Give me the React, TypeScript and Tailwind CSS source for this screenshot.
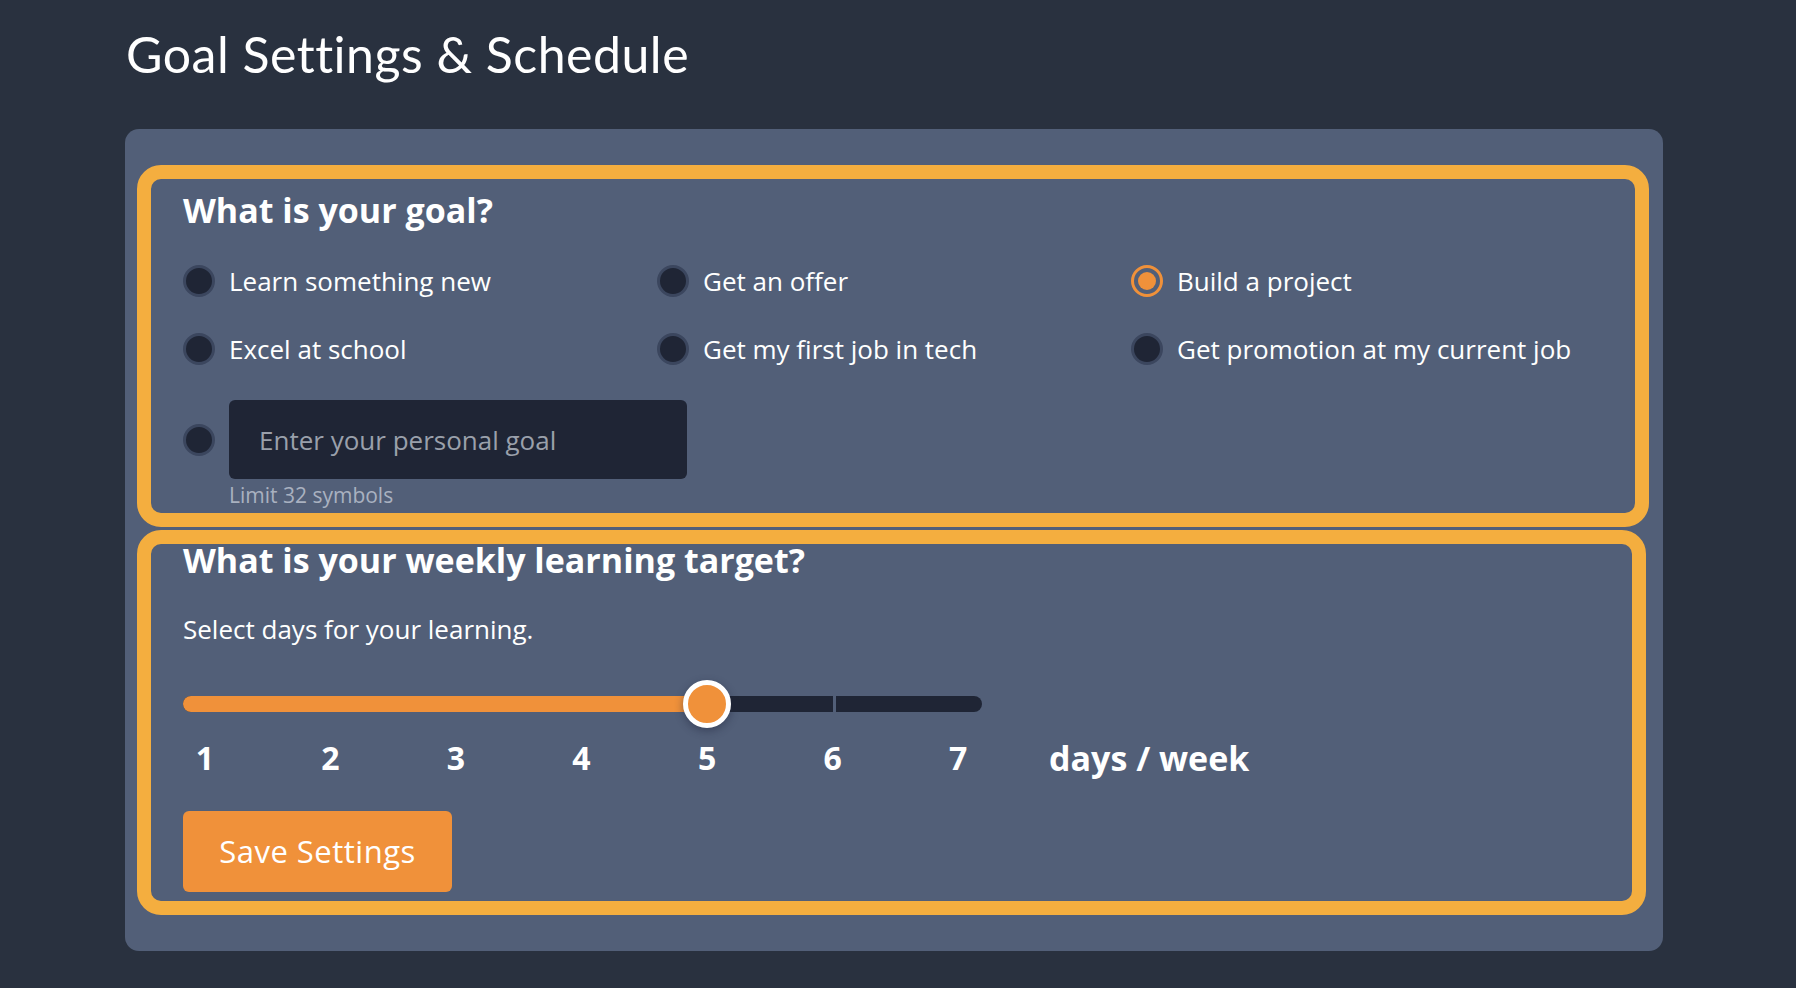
import { useState } from 'react';

const GOALS = [
  'Learn something new',
  'Get an offer',
  'Build a project',
  'Excel at school',
  'Get my first job in tech',
  'Get promotion at my current job',
];

const DAYS = [1, 2, 3, 4, 5, 6, 7];

function Radio({ checked }: { checked: boolean }) {
  return checked ? (
    <span className="flex h-8 w-8 shrink-0 items-center justify-center rounded-full border-[3px] border-[#f0913a]">
      <span className="h-[18px] w-[18px] rounded-full bg-[#f0913a]" />
    </span>
  ) : (
    <span className="h-8 w-8 shrink-0 rounded-full border-[3px] border-[#3b465e] bg-[#1f2535]" />
  );
}

export default function App() {
  const [goal, setGoal] = useState('Build a project');
  const [days] = useState(5);

  return (
    <div className="min-h-screen bg-[#29313f] px-[125px] pt-[22px] pb-10 text-white font-['Open_Sans',sans-serif]">
      <h1 className="pl-[1px] font-['Lato',sans-serif] text-[50px] font-normal leading-[64px] tracking-[0.5px]">
        Goal Settings &amp; Schedule
      </h1>

      <div className="mt-[43px] w-[1538px] rounded-[14px] bg-[#525f78] pt-9 pr-[14px] pb-9 pl-3">
        <section className="rounded-[24px] border-[14px] border-[#f4ae3f] px-8 pb-[6px] pt-[8px]">
          <h2 className="text-[34px] font-bold leading-[46px]">What is your goal?</h2>

          <div className="mt-[32px] grid grid-cols-[474px_474px_1fr] gap-y-[36px]">
            {GOALS.map((g) => (
              <button key={g} onClick={() => setGoal(g)} className="flex h-8 items-center gap-[14px] text-left">
                <Radio checked={goal === g} />
                <span className="text-[26px] leading-8">{g}</span>
              </button>
            ))}
          </div>

          <div className="mt-[35px] flex items-center gap-[14px]">
            <Radio checked={goal === 'custom'} />
            <input
              placeholder="Enter your personal goal"
              onFocus={() => setGoal('custom')}
              className="h-[79px] w-[458px] rounded-[6px] bg-[#1f2535] px-[30px] text-[26px] text-white outline-none placeholder:text-[#9aa0ab]"
            />
          </div>
          <p className="mt-[4px] pl-[46px] text-[21px] leading-6 text-[#a9b1c0]">Limit 32 symbols</p>
        </section>

        <section className="mt-[3px] mr-[3px] rounded-[24px] border-[14px] border-[#f4ae3f] px-8 pb-[9px]">
          <h2 className="-mt-[2px] text-[34px] font-bold leading-[36px]">What is your weekly learning target?</h2>
          <p className="mt-[37px] text-[26px] leading-7">Select days for your learning.</p>

          <div className="relative mt-[53px] h-4 w-[799px] rounded-full bg-[#1f2535]">
            <div className="h-4 w-[524px] rounded-full bg-[#f0913a]" />
            <span className="absolute left-[650px] top-0 h-4 w-[3px] bg-[#525f78]" />
            <span className="absolute left-[500px] top-1/2 h-12 w-12 -translate-y-1/2 rounded-full border-[5px] border-white bg-[#f0913a] shadow-[0_3px_8px_rgba(30,36,60,0.45)]" />
          </div>

          <div className="mt-[30px] flex items-center">
            <div className="-ml-[41px] grid w-[879px] grid-cols-7 text-center text-[32px] font-bold leading-8">
              {DAYS.map((d) => (
                <span key={d} className={d === days ? 'text-white' : 'text-white'}>
                  {d}
                </span>
              ))}
            </div>
            <span className="ml-[28px] text-[34px] font-bold leading-8">days / week</span>
          </div>

          <button className="mt-[37px] h-[81px] w-[269px] rounded-[6px] bg-[#f0913a] text-[31px] tracking-[0.5px] text-white">
            Save Settings
          </button>
        </section>
      </div>
    </div>
  );
}
